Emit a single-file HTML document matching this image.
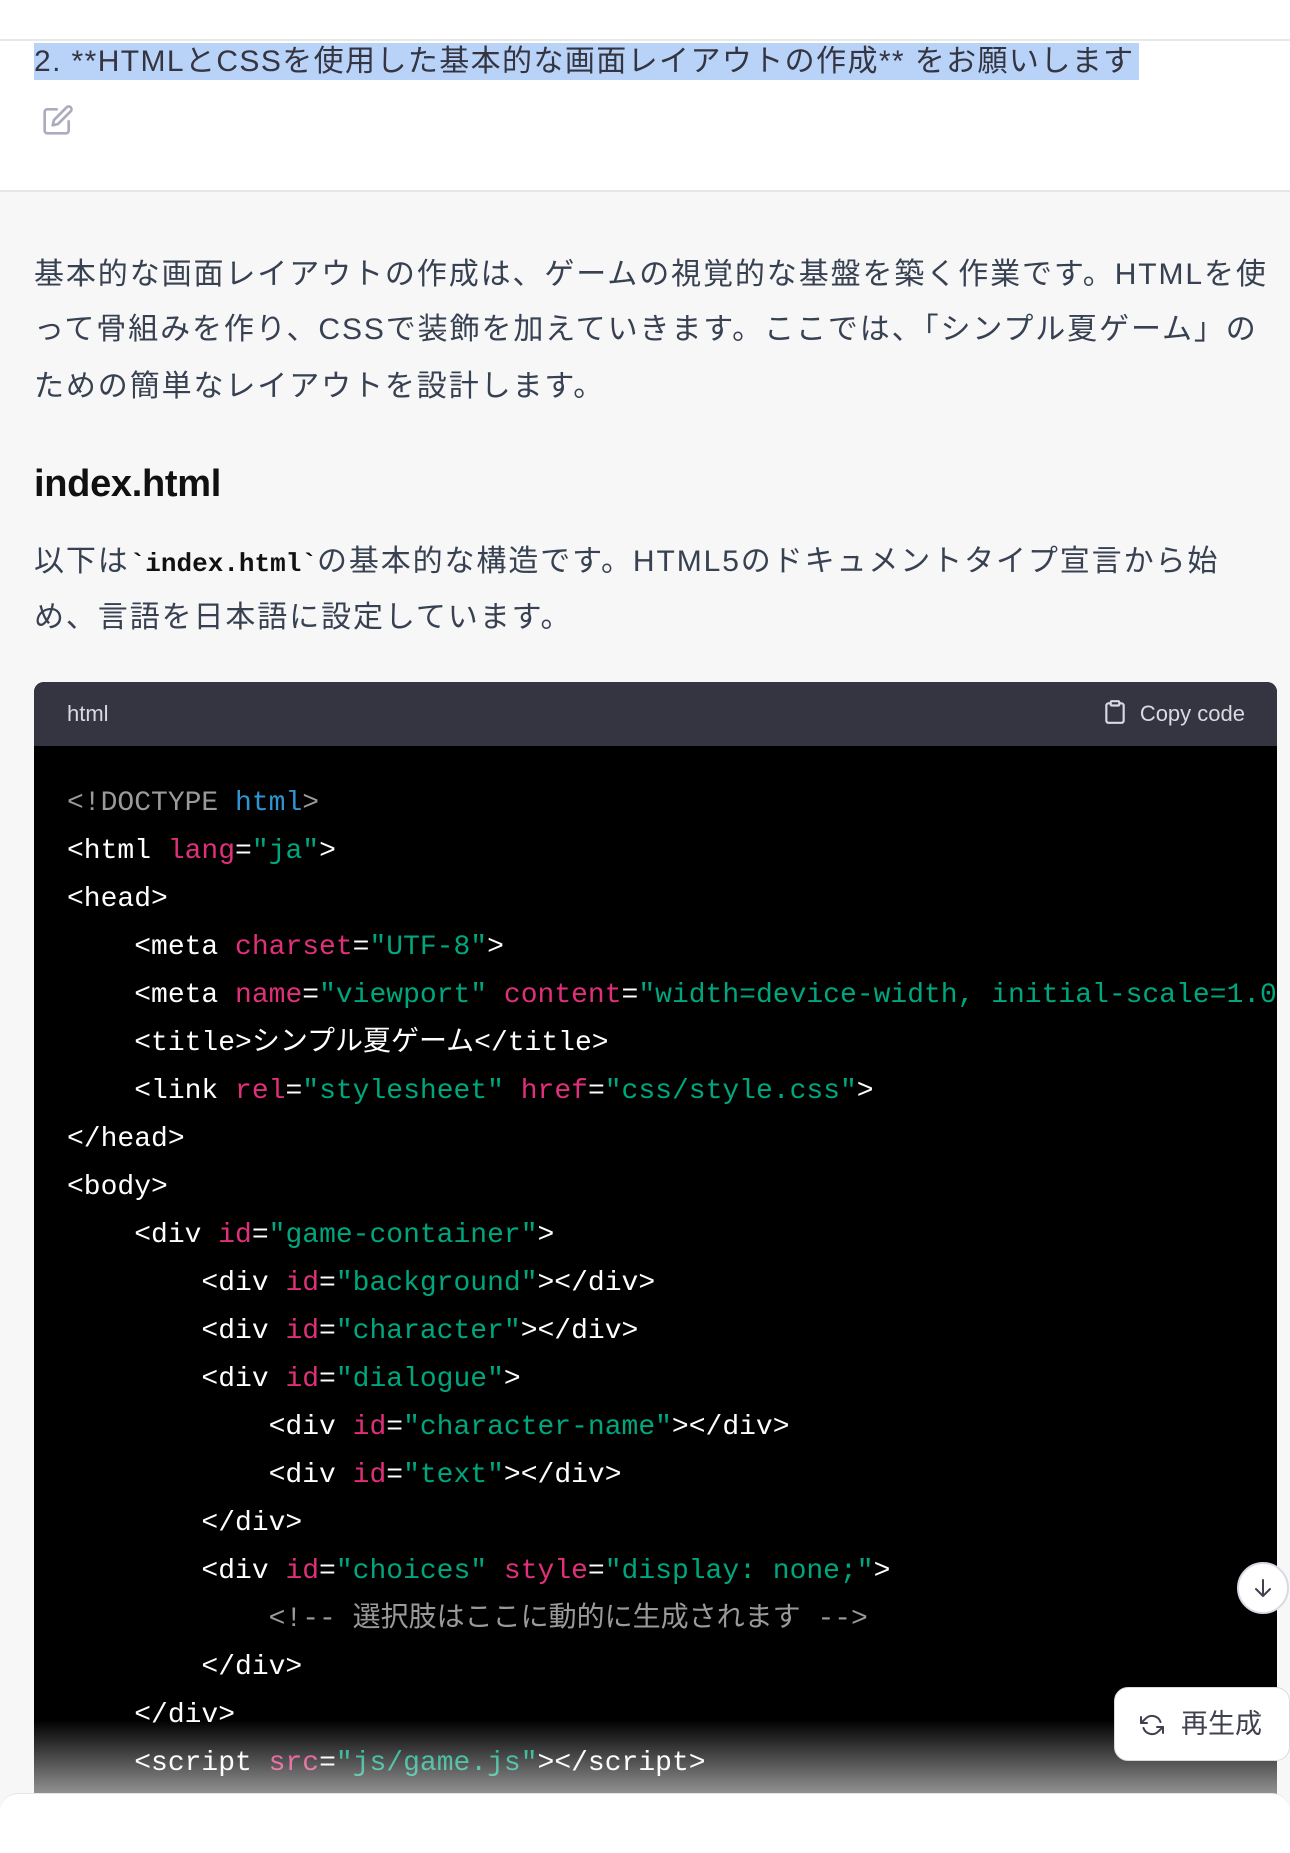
<!DOCTYPE html>
<html lang="ja"><head><meta charset="utf-8">
<style>
*{margin:0;padding:0;box-sizing:border-box}
body{width:1290px;height:1838px;overflow:hidden;background:#f7f7f8;position:relative;font-family:"Liberation Sans","Noto Sans CJK JP",sans-serif;color:#374151}
.top{position:absolute;left:0;top:0;width:1290px;height:192px;background:#fff;border-bottom:2px solid #e5e5e5}
.topbar{position:absolute;left:0;top:0;width:1290px;height:41px;background:#fff;border-bottom:2px solid #e8e8e8}
.sel{position:absolute;left:34px;top:43px;height:37px;width:1105px;background:#b9d3f8}
.q{position:absolute;left:34px;top:43px;font-size:30px;line-height:37px;color:#343541;white-space:nowrap;letter-spacing:1.4px}
.p{position:absolute;left:34px;font-size:30px;line-height:40px;white-space:nowrap;letter-spacing:1.9px;color:#374151}
.h{position:absolute;left:34px;top:462px;font-size:38px;font-weight:bold;color:#111;line-height:44px;letter-spacing:-0.3px}
.ic{font-family:"Liberation Mono",monospace;font-weight:bold;color:#111;font-size:26px;letter-spacing:0}
.code{position:absolute;left:34px;top:682px;width:1243px;height:1160px;background:#000;border-radius:10px 10px 0 0;overflow:hidden}
.ch{height:64px;background:#343541;color:#d9d9e3;font-size:22px;line-height:64px;padding-left:33px;position:relative}
.copy{position:absolute;right:32px;top:0}
.cl{position:absolute;left:33px;font-family:"Liberation Mono","Noto Sans CJK JP",monospace;font-size:28px;line-height:40px;color:#fff;white-space:pre}
.g{color:#9a9a9a}.b{color:#2e95d3}.r{color:#df3079}.s{color:#00a67d}
.fade{position:absolute;left:34px;top:1720px;width:1243px;height:75px;background:linear-gradient(rgba(247,247,248,0),rgba(247,247,248,0.6))}
.bottom{position:absolute;left:0;top:1793px;width:1290px;height:60px;background:#fff;border-radius:18px 18px 0 0;border-top:1px solid #e5e5e5}
.down{position:absolute;left:1237px;top:1562px;width:52px;height:52px;border-radius:50%;background:#fff;border:2px solid #d9d9e3}
.regen{position:absolute;left:1114px;top:1687px;width:176px;height:74px;background:#fff;border:1.5px solid #d9d9e3;border-radius:14px;font-size:27px;color:#40414f;line-height:72px;padding-left:66px}
</style></head><body>
<div class="top"></div>
<div class="topbar"></div>
<div class="sel"></div>
<div class="q">2. **HTMLとCSSを使用した基本的な画面レイアウトの作成** をお願いします</div>
<svg style="position:absolute;left:42px;top:104px" width="32" height="32" viewBox="0 0 24 24" fill="none" stroke="#acacbe" stroke-width="2" stroke-linecap="round" stroke-linejoin="round"><path d="M11 4H4a2 2 0 0 0-2 2v14a2 2 0 0 0 2 2h14a2 2 0 0 0 2-2v-7"/><path d="M18.5 2.5a2.1 2.1 0 0 1 3 3L12 15l-4 1 1-4 9.5-9.5z"/></svg>

<div class="p" style="top:255px">基本的な画面レイアウトの作成は、ゲームの視覚的な基盤を築く作業です。HTMLを使</div>
<div class="p" style="top:310px">って骨組みを作り、CSSで装飾を加えていきます。ここでは、「シンプル夏ゲーム」の</div>
<div class="p" style="top:367px">ための簡単なレイアウトを設計します。</div>
<div class="h">index.html</div>
<div class="p" style="top:542px">以下は<span class="ic">`index.html`</span>の基本的な構造です。HTML5のドキュメントタイプ宣言から始</div>
<div class="p" style="top:598px">め、言語を日本語に設定しています。</div>

<div class="code">
<div class="ch">html<span class="copy"><svg style="vertical-align:-5px;margin-right:12px" width="26" height="28" viewBox="0 0 24 24" fill="none" stroke="#d9d9e3" stroke-width="2" stroke-linecap="round" stroke-linejoin="round"><path d="M16 4h2a2 2 0 0 1 2 2v14a2 2 0 0 1-2 2H6a2 2 0 0 1-2-2V6a2 2 0 0 1 2-2h2"/><rect x="8" y="2" width="8" height="4" rx="1"/></svg>Copy code</span></div>
<div class="cl" style="top:102px"><span class="g">&lt;!DOCTYPE</span> <span class="b">html</span><span class="g">&gt;</span></div>
<div class="cl" style="top:150px">&lt;html <span class="r">lang</span>=<span class="s">"ja"</span>&gt;</div>
<div class="cl" style="top:198px">&lt;head&gt;</div>
<div class="cl" style="top:246px">    &lt;meta <span class="r">charset</span>=<span class="s">"UTF-8"</span>&gt;</div>
<div class="cl" style="top:294px">    &lt;meta <span class="r">name</span>=<span class="s">"viewport"</span> <span class="r">content</span>=<span class="s">"width=device-width, initial-scale=1.0"</span>&gt;</div>
<div class="cl" style="top:342px">    &lt;title&gt;シンプル夏ゲーム&lt;/title&gt;</div>
<div class="cl" style="top:390px">    &lt;link <span class="r">rel</span>=<span class="s">"stylesheet"</span> <span class="r">href</span>=<span class="s">"css/style.css"</span>&gt;</div>
<div class="cl" style="top:438px">&lt;/head&gt;</div>
<div class="cl" style="top:486px">&lt;body&gt;</div>
<div class="cl" style="top:534px">    &lt;div <span class="r">id</span>=<span class="s">"game-container"</span>&gt;</div>
<div class="cl" style="top:582px">        &lt;div <span class="r">id</span>=<span class="s">"background"</span>&gt;&lt;/div&gt;</div>
<div class="cl" style="top:630px">        &lt;div <span class="r">id</span>=<span class="s">"character"</span>&gt;&lt;/div&gt;</div>
<div class="cl" style="top:678px">        &lt;div <span class="r">id</span>=<span class="s">"dialogue"</span>&gt;</div>
<div class="cl" style="top:726px">            &lt;div <span class="r">id</span>=<span class="s">"character-name"</span>&gt;&lt;/div&gt;</div>
<div class="cl" style="top:774px">            &lt;div <span class="r">id</span>=<span class="s">"text"</span>&gt;&lt;/div&gt;</div>
<div class="cl" style="top:822px">        &lt;/div&gt;</div>
<div class="cl" style="top:870px">        &lt;div <span class="r">id</span>=<span class="s">"choices"</span> <span class="r">style</span>=<span class="s">"display: none;"</span>&gt;</div>
<div class="cl" style="top:918px"><span class="g">            &lt;!-- 選択肢はここに動的に生成されます --&gt;</span></div>
<div class="cl" style="top:966px">        &lt;/div&gt;</div>
<div class="cl" style="top:1014px">    &lt;/div&gt;</div>
<div class="cl" style="top:1062px">    &lt;script <span class="r">src</span>=<span class="s">"js/game.js"</span>&gt;&lt;/script&gt;</div>
</div>
<div class="fade"></div>
<div class="down"><svg style="position:absolute;left:12px;top:12px" width="24" height="24" viewBox="0 0 24 24" fill="none" stroke="#40414f" stroke-width="2" stroke-linecap="round" stroke-linejoin="round"><path d="M12 4v16M5 13l7 7 7-7"/></svg></div>
<div class="regen"><svg style="position:absolute;left:25px;top:25px" width="24" height="24" viewBox="0 0 24 24" fill="none" stroke="#40414f" stroke-width="2" stroke-linecap="round" stroke-linejoin="round"><path d="M1 4v6h6M23 20v-6h-6"/><path d="M20.5 9A9 9 0 0 0 5.6 5.6L1 10m22 4-4.6 4.4A9 9 0 0 1 3.5 15"/></svg>再生成</div>
<div class="bottom"></div>
</body></html>
